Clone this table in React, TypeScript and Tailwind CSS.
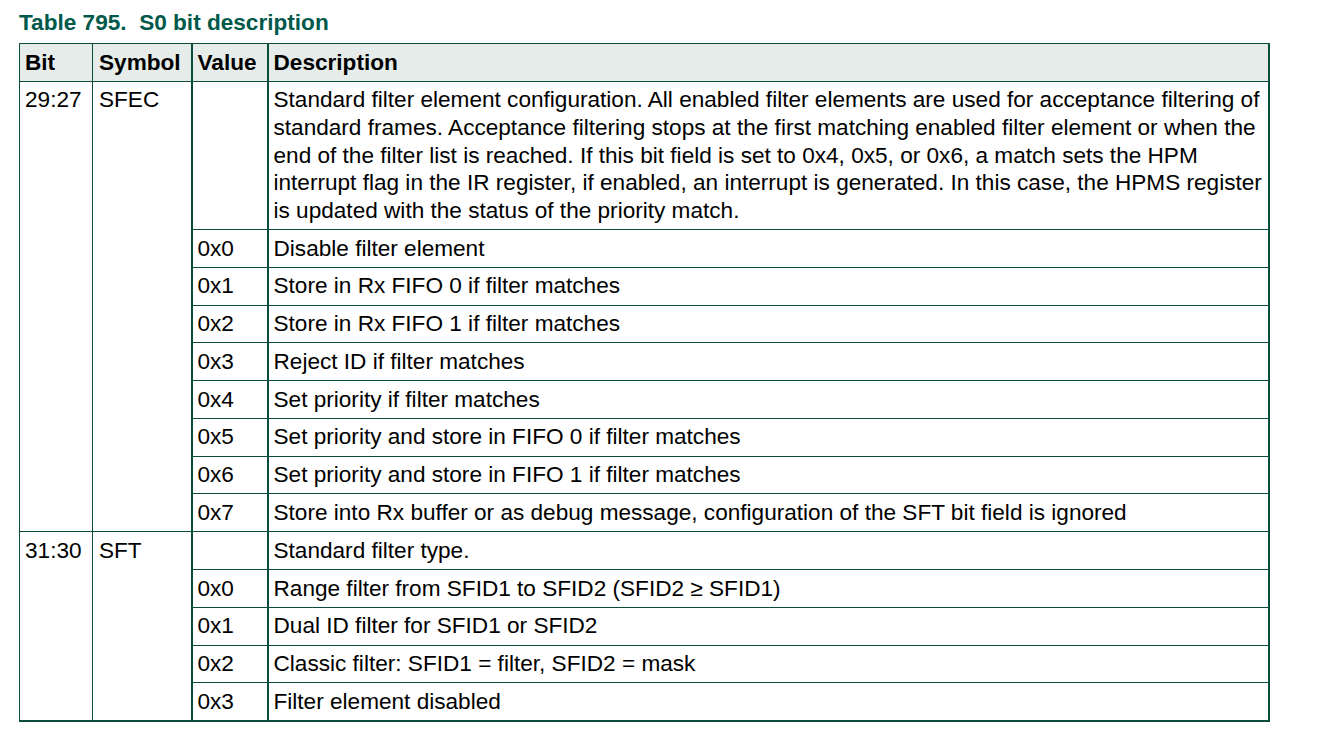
import React from 'react';

type ValueRow = { value: string; text: string };

const sfecValues: ValueRow[] = [
  { value: '0x0', text: 'Disable filter element' },
  { value: '0x1', text: 'Store in Rx FIFO 0 if filter matches' },
  { value: '0x2', text: 'Store in Rx FIFO 1 if filter matches' },
  { value: '0x3', text: 'Reject ID if filter matches' },
  { value: '0x4', text: 'Set priority if filter matches' },
  { value: '0x5', text: 'Set priority and store in FIFO 0 if filter matches' },
  { value: '0x6', text: 'Set priority and store in FIFO 1 if filter matches' },
  { value: '0x7', text: 'Store into Rx buffer or as debug message, configuration of the SFT bit field is ignored' },
];

const sftValues: ValueRow[] = [
  { value: '0x0', text: 'Range filter from SFID1 to SFID2 (SFID2 \u2265 SFID1)' },
  { value: '0x1', text: 'Dual ID filter for SFID1 or SFID2' },
  { value: '0x2', text: 'Classic filter: SFID1 = filter, SFID2 = mask' },
  { value: '0x3', text: 'Filter element disabled' },
];

const sfecDesc = [
  'Standard filter element configuration. All enabled filter elements are used for acceptance filtering of',
  'standard frames. Acceptance filtering stops at the first matching enabled filter element or when the',
  'end of the filter list is reached. If this bit field is set to 0x4, 0x5, or 0x6, a match sets the HPM',
  'interrupt flag in the IR register, if enabled, an interrupt is generated. In this case, the HPMS register',
  'is updated with the status of the priority match.',
];

// 셀 공통 스타일
const cell = 'align-top px-[5px] py-[4.6px] border-[#0b4d3d] text-left';

function Group({ bit, symbol, desc, values, last }: {
  bit: string;
  symbol: string;
  desc: string[];
  values: ValueRow[];
  last?: boolean;
}) {
  const span = values.length + 1;
  const bottom = last ? 'border-b-2' : 'border-b';
  return (
    <>
      <tr>
        <td rowSpan={span} className={`${cell} border-l border-r ${bottom}`}>{bit}</td>
        <td rowSpan={span} className={`${cell} pl-[6px] border-r-2 ${bottom}`}>{symbol}</td>
        <td className={`${cell} border-r-2 border-b`}></td>
        <td className={`${cell} border-r-2 border-b whitespace-nowrap`}>
          {desc.map((line, i) => (
            <React.Fragment key={i}>
              {line}
              {i < desc.length - 1 && <br />}
            </React.Fragment>
          ))}
        </td>
      </tr>
      {values.map((v, i) => {
        const b = last && i === values.length - 1 ? 'border-b-2' : 'border-b';
        return (
          <tr key={v.value}>
            <td className={`${cell} border-r-2 ${b}`}>{v.value}</td>
            <td className={`${cell} border-r-2 ${b} whitespace-nowrap`}>{v.text}</td>
          </tr>
        );
      })}
    </>
  );
}

export default function App() {
  return (
    <div
      className="min-h-[745px] bg-white pl-[19px] pt-[9px] text-black"
      style={{ fontFamily: '"Liberation Sans", Arial, sans-serif' }}
    >
      <div className="text-[22.6px] leading-[27px] font-bold text-[#00594a] whitespace-pre">
        {'Table 795.  S0 bit description'}
      </div>
      <table className="mt-[7px] w-[1251px] table-fixed border-collapse text-[22.6px] leading-[27.6px]">
        <colgroup>
          <col className="w-[73px]" />
          <col className="w-[99px]" />
          <col className="w-[76px]" />
          <col />
        </colgroup>
        <thead>
          <tr className="bg-[#e6ecea] font-bold">
            <th className={`${cell} border border-t`}>Bit</th>
            <th className={`${cell} pl-[6px] border border-r-2`}>Symbol</th>
            <th className={`${cell} border border-r-2`}>Value</th>
            <th className={`${cell} border border-r-2`}>Description</th>
          </tr>
        </thead>
        <tbody>
          <Group bit="29:27" symbol="SFEC" desc={sfecDesc} values={sfecValues} />
          <Group bit="31:30" symbol="SFT" desc={['Standard filter type.']} values={sftValues} last />
        </tbody>
      </table>
    </div>
  );
}
